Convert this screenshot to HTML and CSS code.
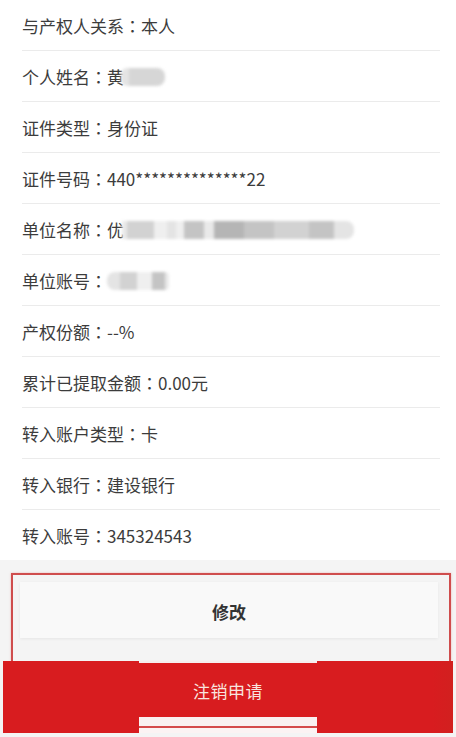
FILE: index.html
```html
<!DOCTYPE html>
<html lang="zh-CN">
<head>
<meta charset="utf-8">
<title>转入账户信息</title>
<link rel="stylesheet" href="styles.css">
</head>
<body>
<div class="page">
  <ul class="list">
    <li class="row">与产权人关系<span class="colon">：</span>本人</li>
    <li class="row">个人姓名<span class="colon">：</span>黄<span class="mask mask-name"><i class="m m-l1"></i><i class="m m-g1"></i></span></li>
    <li class="row">证件类型<span class="colon">：</span>身份证</li>
    <li class="row">证件号码<span class="colon">：</span>440**************22</li>
    <li class="row">单位名称<span class="colon">：</span>优<span class="mask mask-unit"><i class="m m-l2"></i><i class="m m-g1 w27"></i><i class="m m-l3 w13"></i><i class="m m-l1 w9"></i><i class="m m-l3 w8"></i><i class="m m-g2 w20"></i><i class="m m-l2 w10"></i><i class="m m-g3 w30"></i><i class="m m-g2 w30"></i><i class="m m-g1 w35"></i><i class="m m-g2 w25"></i><i class="m m-l1 w20 r"></i></span></li>
    <li class="row">单位账号<span class="colon">：</span><span class="mask mask-acct"><i class="m m-l1 w13"></i><i class="m m-g1 w17"></i><i class="m m-l3 w15"></i><i class="m m-g2 w13"></i><i class="m m-l2 w4 r"></i></span></li>
    <li class="row">产权份额<span class="colon">：</span>--%</li>
    <li class="row">累计已提取金额<span class="colon">：</span>0.00元</li>
    <li class="row">转入账户类型<span class="colon">：</span>卡</li>
    <li class="row">转入银行<span class="colon">：</span>建设银行</li>
    <li class="row">转入账号<span class="colon">：</span>345324543</li>
  </ul>
  <div class="footer">
    <div class="frame">
      <button class="btn-edit" type="button">修改</button>
    </div>
    <div class="cancel-bar">
      <div class="cb-side"></div>
      <div class="cb-mid">
        <div class="cb-strip-top"></div>
        <div class="cb-label">注销申请</div>
        <div class="cb-strip-white"></div>
        <div class="cb-strip-red"></div>
        <div class="cb-strip-pink"></div>
      </div>
      <div class="cb-side cb-side-right"></div>
    </div>
  </div>
</div>
</body>
</html>
```

FILE: styles.css
```css
* { box-sizing: border-box; }

html, body {
  margin: 0;
  padding: 0;
  background: #ffffff;
}

body {
  font-family: "Noto Sans CJK SC", "Noto Sans", "Liberation Sans", sans-serif;
  color: #3c3c3c;
  width: 456px;
  height: 737px;
  overflow: hidden;
}

.page {
  display: flex;
  flex-direction: column;
  height: 737px;
}

.list {
  list-style: none;
  margin: 0;
  padding: 0 16px 0 22px;
}

.row {
  height: 51px;
  display: flex;
  align-items: center;
  font-size: 17px;
  line-height: 20px;
  border-bottom: 1px solid #ebebeb;
  padding-top: 1px;
  white-space: nowrap;
}

.row:last-child {
  border-bottom: none;
  height: 50px;
}

.colon {
  font-family: "Noto Sans CJK TC", "Noto Sans CJK SC", sans-serif;
  display: inline-block;
  width: 17px;
  text-align: center;
}

/* redaction blur */
.mask {
  display: inline-flex;
  height: 18px;
  filter: blur(1.4px);
  align-self: center;
  margin-top: 1px;
}

.mask-name { margin-left: -3px; }
.mask-unit { margin-left: -2px; }
.mask-acct { margin-left: 0; }

.m {
  display: block;
  height: 100%;
  width: 24px;
}

.mask-name .m-l1 { width: 8px; border-radius: 6px 0 0 6px; }
.mask-name .m-g1 { width: 36px; border-radius: 0 8px 8px 0; background: #d6d6d6; }

.m-l1 { background: #e4e4e4; }
.m-l2 { background: #e9e9e9; width: 5px; }
.m-l3 { background: #efefef; }
.m-g1 { background: #d2d2d2; }
.m-g2 { background: #c4c4c4; }
.m-g3 { background: #b5b5b5; }

.w4 { width: 4px; }
.w8 { width: 8px; }
.w9 { width: 9px; }
.w10 { width: 10px; }
.w13 { width: 13px; }
.w15 { width: 15px; }
.w17 { width: 17px; }
.w20 { width: 20px; }
.w25 { width: 25px; }
.w27 { width: 27px; }
.w30 { width: 30px; }
.w35 { width: 35px; }
.r { border-radius: 0 8px 8px 0; }

.mask-acct .m-l1 { border-radius: 8px 0 0 8px; }

/* footer */
.footer {
  flex: 1;
  background: #f4f4f4;
  padding-top: 13px;
}

.frame {
  margin: 0 5px 0 11px;
  border: 2px solid #cf4d4d;
  border-bottom: none;
  padding: 7px 11px 23px 7px;
  box-shadow: 0 0 2px rgba(230, 120, 120, 0.5);
}

.btn-edit {
  display: block;
  width: 100%;
  height: 56px;
  border: none;
  background: #f9f9f9;
  box-shadow: 0 1px 3px rgba(0, 0, 0, 0.06);
  font-family: "Noto Sans CJK SC", "Noto Sans", sans-serif;
  font-size: 17px;
  font-weight: 700;
  color: #333333;
  padding: 0;
  padding-top: 2px;
}

.cancel-bar {
  display: flex;
  height: 72px;
  margin: 0 3px;
}

.cb-side {
  width: 136px;
  background: #d81c1f;
}

.cb-side-right {
  width: auto;
  flex: 1;
  background: linear-gradient(to right, #d81c1f 85%, #d2201f 100%);
}

.cb-mid {
  width: 178px;
  display: flex;
  flex-direction: column;
  background: #d81c1f;
}

.cb-strip-top {
  height: 2px;
  background: #f6eeee;
}

.cb-label {
  height: 54px;
  display: flex;
  align-items: center;
  justify-content: center;
  font-size: 17px;
  color: #f8e4df;
  letter-spacing: 0.5px;
}

.cb-strip-white {
  height: 9px;
  background: #f9f0f0;
}

.cb-strip-red {
  height: 2px;
  background: #d44a4a;
}

.cb-strip-pink {
  height: 5px;
  background: #fbf3f3;
}
```
